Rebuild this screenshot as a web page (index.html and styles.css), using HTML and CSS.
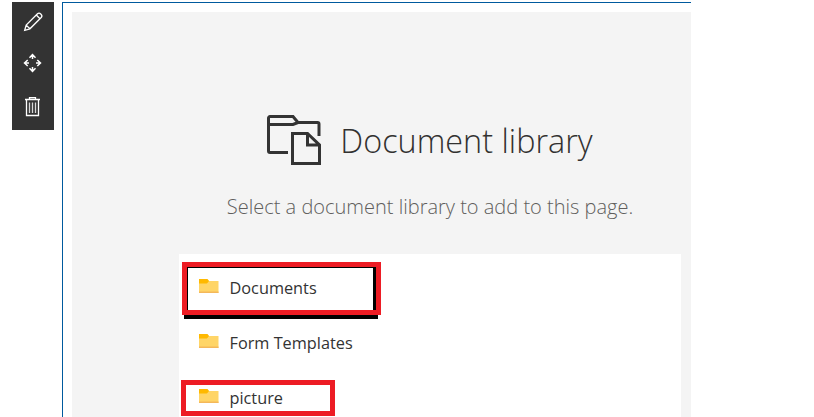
FILE: index.html
```html
<!DOCTYPE html>
<html lang="en">
<head>
<meta charset="utf-8">
<title>Document library</title>
<link rel="stylesheet" href="styles.css">
</head>
<body>
<div class="stage">
  <aside class="toolbar">
    <svg class="tool" width="24" height="24" viewBox="0 0 24 24"><path d="M3.700 20.300l1.500-5.200L16.500 3.800c.9-.9 2.200-.9 3 0l.7.7c.8.8.8 2.100 0 3L8.900 18.800z M5.200 15.100l3.700 3.700 M15.300 5l3.700 3.700" fill="none" stroke="#fff" stroke-width="1.300"/></svg>
    <svg class="tool" width="24" height="24" viewBox="0 0 24 24"><path d="M8.500 6.700l3-3.200 3 3.200M11.500 4v4M8.500 17.300l3 3.200 3-3.200M11.500 20v-4M6.700 9l-3.200 3 3.200 3M4 12h4M16.300 9l3.200 3-3.200 3M19 12h-4" fill="none" stroke="#fff" stroke-width="1.500"/></svg>
    <svg class="tool tool-trash" width="24" height="24" viewBox="0 0 24 24"><path d="M4 4.500h15M8.500 4.500V2.700h6v1.800M5.500 4.500v16h12v-16" fill="none" stroke="#fff" stroke-width="1.300"/><path d="M8.500 7.500v10.500M11.500 7.500v10.500M14.500 7.500v10.500" fill="none" stroke="#d8d8d8" stroke-width="1.300"/></svg>
  </aside>
  <main class="frame">
    <section class="panel">
      <header class="heading">
        <svg class="library-icon" width="54" height="50" viewBox="0 0 54 50"><path d="M21 37.500H3a1.500 1.500 0 0 1-1.500-1.500V3A1.500 1.500 0 0 1 3 1.500h23l5 6h19.500a1.500 1.500 0 0 1 1.500 1.500V21M1.500 9.500H26l5-2" fill="none" stroke="#333" stroke-width="3"/><path d="M25.500 48.500v-30H40.500l12 11.500v18.500zM40.500 18.500V30h12" fill="none" stroke="#333" stroke-width="3"/></svg>
        <h1 class="title">Document library</h1>
      </header>
      <p class="subtitle">Select a document library to add to this page.</p>
      <ul class="library-list">
        <li class="library-item"><svg class="folder" width="20" height="16" viewBox="0 0 20 16"><path d="M0 1h8.500l2 2.500L8.500 6H0z" fill="#ffb900"/><path d="M0 5.500h8L10 3h9.500v12H0z" fill="#ffd567"/><path d="M0 13.500h19.500V15H0z" fill="#f4b85a"/></svg>Documents</li>
        <li class="library-item"><svg class="folder" width="20" height="16" viewBox="0 0 20 16"><path d="M0 1h8.500l2 2.500L8.500 6H0z" fill="#ffb900"/><path d="M0 5.500h8L10 3h9.500v12H0z" fill="#ffd567"/><path d="M0 13.500h19.500V15H0z" fill="#f4b85a"/></svg>Form Templates</li>
        <li class="library-item"><svg class="folder" width="20" height="16" viewBox="0 0 20 16"><path d="M0 1h8.500l2 2.500L8.500 6H0z" fill="#ffb900"/><path d="M0 5.500h8L10 3h9.500v12H0z" fill="#ffd567"/><path d="M0 13.500h19.500V15H0z" fill="#f4b85a"/></svg>picture</li>
      </ul>
    </section>
  </main>
  <div class="mark mark-shadow"></div>
  <div class="mark mark-documents"></div>
  <div class="mark mark-picture"></div>
</div>
</body>
</html>
```
FILE: styles.css
```css
html, body {
  margin: 0;
  height: 100%;
  overflow: hidden;
  background: #fff;
}

.stage {
  position: relative;
  display: flex;
  align-items: flex-start;
  gap: 8px;
  height: 417px;
  padding: 2px 0 0 12px;
  box-sizing: border-box;
  font-family: "Open Sans", "Noto Sans", sans-serif;
  overflow: hidden;
}

.toolbar {
  display: flex;
  flex-direction: column;
  align-items: center;
  gap: 17px;
  width: 42px;
  height: 128px;
  padding-top: 8px;
  box-sizing: border-box;
  background: #333;
}

.tool {
  display: block;
}

.tool-trash {
  margin-top: 3px;
}

.frame {
  width: 629px;
  height: 415px;
  box-sizing: border-box;
  padding: 9px 0 0 9px;
  border-top: 1px solid #005a9e;
  border-left: 1px solid #005a9e;
}

.panel {
  height: 500px;
  padding: 100px 0 0 97px;
  box-sizing: border-box;
  background: #f4f4f4;
}

.heading {
  display: flex;
  align-items: center;
  justify-content: center;
  gap: 19px;
  height: 56px;
}

.library-icon {
  display: block;
}

.title {
  margin: 0;
  font-size: 32.4px;
  font-weight: 300;
  line-height: 56px;
  color: #323130;
}

.subtitle {
  margin: 27px 0 0;
  font-size: 20px;
  font-weight: 300;
  line-height: 24px;
  text-align: center;
  color: #605e5c;
}

.library-list {
  margin: 35px 10px 0;
  padding: 6px 0 0;
  list-style: none;
  background: #fff;
}

.library-item {
  display: flex;
  align-items: center;
  gap: 10.5px;
  height: 55px;
  padding-left: 20px;
  font-size: 16.3px;
  color: #333;
}

.folder {
  display: block;
  margin-top: -3px;
}

.mark {
  position: absolute;
  box-sizing: border-box;
}

.mark-shadow {
  left: 184px;
  top: 264px;
  width: 194px;
  height: 55px;
  border: solid #000;
  border-width: 4px 5px 4px 4px;
}

.mark-documents {
  left: 182px;
  top: 262px;
  width: 199px;
  height: 53px;
  border: 5px solid #ed1c24;
}

.mark-picture {
  left: 181px;
  top: 380px;
  width: 154px;
  height: 36px;
  border: 5px solid #ed1c24;
}
```
